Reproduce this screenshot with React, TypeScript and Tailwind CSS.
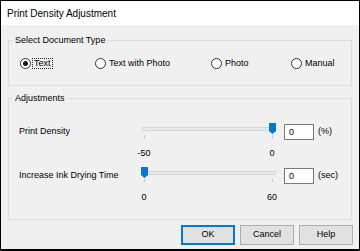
import React from "react";

const font = { fontFamily: '"Liberation Sans", Arial, sans-serif' };

function Radio({ label, checked, focused }: { label: string; checked?: boolean; focused?: boolean }) {
  return (
    <div className="flex items-center">
      <span className="w-[11px] h-[11px] rounded-full border border-[#333333] bg-white flex items-center justify-center">
        {checked && <span className="w-[5px] h-[5px] rounded-full bg-[#1a1a1a]" />}
      </span>
      <span
        className={`ml-[1px] px-[1px] leading-[9px] py-[0px] text-[9px] text-black ${
          focused ? "border border-dotted border-[#222222]" : "border border-transparent"
        }`}
      >
        {label}
      </span>
    </div>
  );
}

function Thumb() {
  return (
    <svg width="7" height="11" viewBox="0 0 7 11" className="absolute top-[3px]">
      <polygon points="0,0 7,0 7,8 3.5,11 0,8" fill="#0078d7" />
    </svg>
  );
}

type SliderRowProps = {
  label: string;
  thumbLeft: number;
  minLabel: string;
  maxLabel: string;
  unit: string;
};

function SliderRow({ label, thumbLeft, minLabel, maxLabel, unit }: SliderRowProps) {
  return (
    <div className="flex h-[44px]">
      {/* label */}
      <div className="w-[132px] pl-[10px] pt-[5px] text-[9px] leading-[12px] text-black">{label}</div>

      {/* slider */}
      <div className="relative w-[143px] h-full">
        <div className="absolute left-[1px] top-[7px] w-[134px] h-[4px] bg-[#e7eaea] border border-[#d6d6d6]" />
        <div className="absolute left-[3px] top-[15px] w-[1px] h-[3px] bg-[#c4c4c4]" />
        <div className="absolute left-[131px] top-[15px] w-[1px] h-[3px] bg-[#c4c4c4]" />
        <div className="absolute" style={{ left: thumbLeft, top: 0 }}>
          <Thumb />
        </div>
        <div className="absolute left-[-17px] w-[40px] top-[27px] text-center text-[9px] leading-[12px] text-black">
          {minLabel}
        </div>
        <div className="absolute left-[111px] w-[40px] top-[27px] text-center text-[9px] leading-[12px] text-black">
          {maxLabel}
        </div>
      </div>

      {/* input */}
      <div className="mt-[4px] w-[30px] h-[16px] bg-white border border-[#7a7a7a] pl-[4px] text-[9px] leading-[14px] text-black">
        0
      </div>
      <div className="ml-[4px] pt-[5px] text-[9px] leading-[12px] text-black">{unit}</div>
    </div>
  );
}

function Group({ title, className, children }: { title: string; className?: string; children: React.ReactNode }) {
  return (
    <div className={`relative border border-[#dcdcdc] ${className ?? ""}`}>
      <span className="absolute left-[4px] top-[-7px] px-[2px] bg-[#f0f0f0] text-[9px] leading-[12px] text-black">
        {title}
      </span>
      {children}
    </div>
  );
}

export default function App() {
  return (
    <div
      className="w-[360px] h-[251px] border border-black border-b-2 bg-[#f0f0f0] flex flex-col overflow-hidden"
      style={font}
    >
      <div className="h-[24px] bg-white flex items-center pl-[6px] text-[10px] text-black">
        Print Density Adjustment
      </div>

      <div className="px-[7px]">
        <Group title="Select Document Type" className="mt-[15px] h-[46px]">
          <div className="flex items-center pl-[11px] pt-[17px]">
            <div className="w-[75px]">
              <Radio label="Text" checked focused />
            </div>
            <div className="w-[116px]">
              <Radio label="Text with Photo" />
            </div>
            <div className="w-[80px]">
              <Radio label="Photo" />
            </div>
            <div>
              <Radio label="Manual" />
            </div>
          </div>
        </Group>

        <Group title="Adjustments" className="mt-[12px] h-[122px] pt-[21px]">
          <SliderRow label="Print Density" thumbLeft={128} minLabel="-50" maxLabel="0" unit="(%)" />
          <SliderRow label="Increase Ink Drying Time" thumbLeft={0} minLabel="0" maxLabel="60" unit="(sec)" />
        </Group>
      </div>

      <div className="mt-[5px] flex justify-end gap-[5px] pr-[6px]">
        <button className="w-[54px] h-[20px] bg-[#e1e1e1] border-2 border-[#0078d7] text-[9px] text-black">
          OK
        </button>
        <button className="w-[54px] h-[20px] bg-[#e1e1e1] border border-[#adadad] text-[9px] text-black">
          Cancel
        </button>
        <button className="w-[54px] h-[20px] bg-[#e1e1e1] border border-[#adadad] text-[9px] text-black">
          Help
        </button>
      </div>
    </div>
  );
}
